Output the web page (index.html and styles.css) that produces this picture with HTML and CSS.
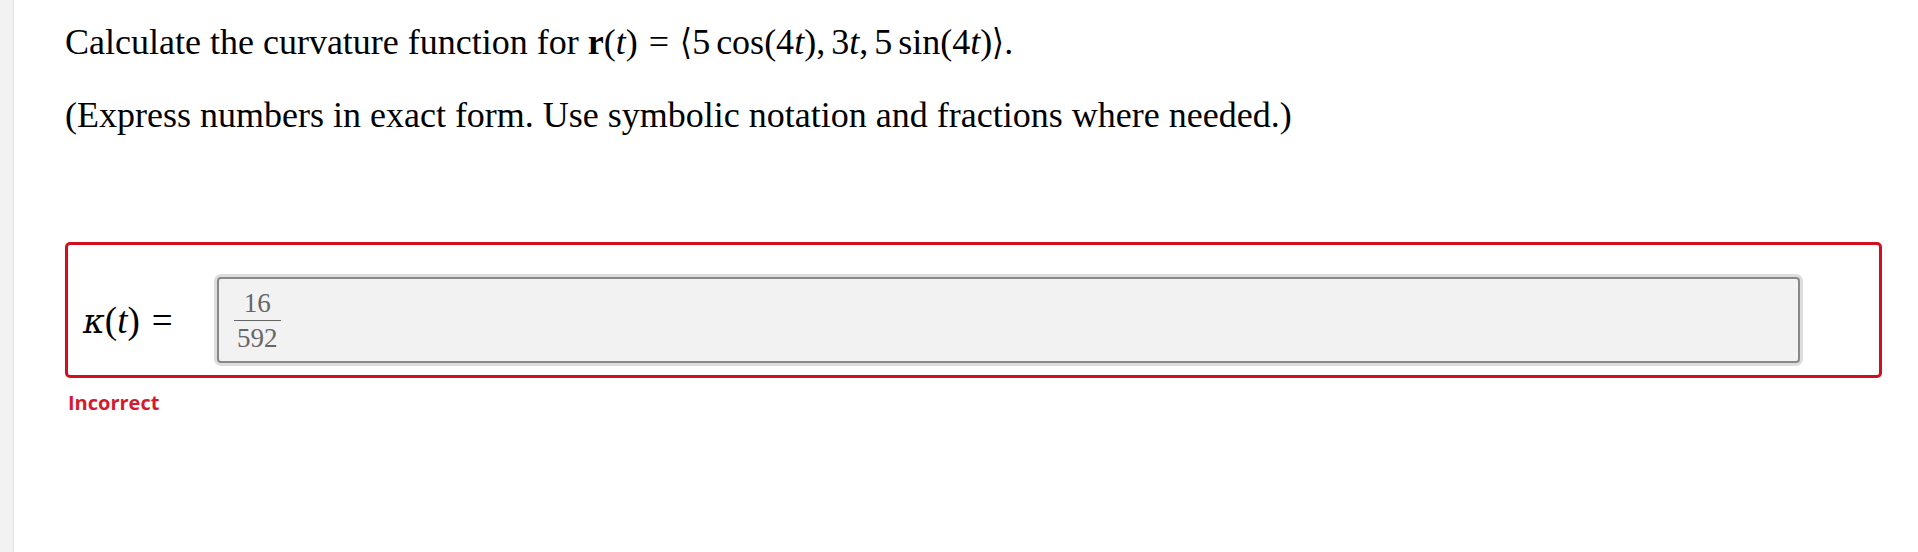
FILE: index.html
```html
<!DOCTYPE html>
<html lang="en">
<head>
<meta charset="utf-8">
<title>Curvature question</title>
<link rel="stylesheet" href="styles.css">
</head>
<body>
<div class="page">
  <div class="sidebar"></div>
  <main class="content">
    <p class="question">Calculate the curvature function for <span class="math"><b class="bold">r</b>(<i>t</i>)<span class="rel">=</span><span class="angle">⟨</span>5<span class="thin"></span>cos(4<i>t</i>),<span class="thin"></span>3<i>t</i>,<span class="thin"></span>5<span class="thin"></span>sin(4<i>t</i>)<span class="angle">⟩</span></span>.</p>
    <p class="hint">(Express numbers in exact form. Use symbolic notation and fractions where needed.)</p>
    <div class="answer-box">
      <div class="label"><span class="math"><i class="kappa">κ</i>(<i>t</i>)<span class="rel">=</span></span></div>
      <div class="input">
        <span class="frac">
          <span class="num">16</span>
          <span class="den">592</span>
        </span>
      </div>
    </div>
    <div class="feedback">Incorrect</div>
  </main>
</div>
</body>
</html>
```

FILE: styles.css
```css
html, body {
  margin: 0;
  padding: 0;
  background: #ffffff;
}

.page {
  display: flex;
  min-height: 552px;
}

.sidebar {
  width: 13px;
  flex: none;
  background: #f2f2f2;
  border-right: 1px solid #e0e0e0;
}

.content {
  flex: 1;
  padding: 20px 36px 0 51px;
  font-family: "Liberation Serif", "Times New Roman", serif;
  color: #000;
}

.question,
.hint {
  margin: 0;
  font-size: 36px;
  line-height: 43px;
}

.question {
  margin-bottom: 30px;
}

.math i {
  font-family: "Liberation Serif", "DejaVu Serif", serif;
  font-style: italic;
}

.math .kappa {
  font-family: "DejaVu Serif", serif;
  font-size: 0.9em;
}

.bold {
  font-weight: bold;
}

.rel {
  padding: 0 11px;
}

.angle {
  font-family: "DejaVu Serif", serif;
  display: inline-block;
  transform: scaleX(0.85);
  margin: 0 -1px;
}

.thin {
  display: inline-block;
  width: 6px;
}

.answer-box {
  margin-top: 105px;
  border: 3px solid #d0101e;
  border-radius: 5px;
  padding: 32px 79px 12px 15px;
  display: flex;
  align-items: center;
}

.label {
  width: 134px;
  flex: none;
  font-size: 37px;
}

.label .rel {
  padding: 0 12px;
}

.input {
  flex: 1;
  height: 82px;
  border: 2px solid #888888;
  border-radius: 4px;
  background: #f2f2f2;
  box-shadow: 0 0 0 3px #dddddd;
  display: flex;
  align-items: center;
  padding-left: 15px;
}

.frac {
  display: inline-flex;
  flex-direction: column;
  align-items: stretch;
  text-align: center;
  font-size: 27px;
  line-height: 26px;
  color: #666666;
}

.num {
  padding: 0 3px 4px;
  border-bottom: 1.5px solid #666666;
}

.den {
  padding: 4px 3px 0;
}

.feedback {
  margin-top: 11px;
  font-family: "Open Sans", "Liberation Sans", sans-serif;
  font-weight: 700;
  font-size: 20px;
  line-height: 28px;
  color: #d41a2f;
  padding-left: 3px;
}
```
